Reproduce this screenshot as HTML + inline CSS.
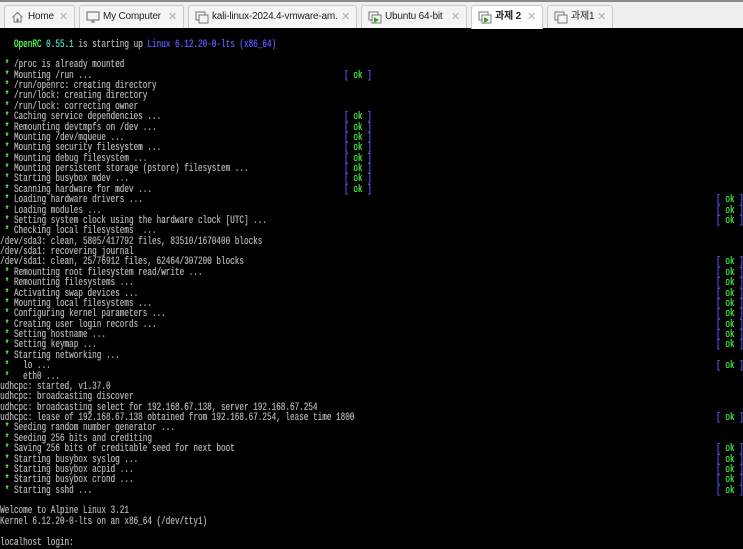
<!DOCTYPE html>
<html><head><meta charset="utf-8"><style>
*{margin:0;padding:0;box-sizing:border-box}
body{width:743px;height:545px;overflow:hidden;background:#000;position:relative;font-family:"Liberation Sans","Noto Sans CJK KR",sans-serif}
#bar{position:absolute;left:0;top:0;width:743px;height:28px;background:#efefef;border-top:2px solid #8a8a8a}
.tab{position:absolute;top:3px;height:23px;border:1px solid #c9c9c9;border-bottom:none;border-radius:3px 3px 0 0;background:#f4f4f4;font-size:10px;color:#222;line-height:22px;white-space:nowrap;overflow:hidden;letter-spacing:-0.2px}
.tab.act{background:#fff;height:24px}
.tab .x{position:absolute;right:6px;top:0;color:#b0b0b0;font-size:11px;background:inherit;padding-left:3px}
.tab svg{position:absolute;left:6px;top:5px}
.tab .lb{position:absolute;left:23px;top:0}
#term{position:absolute;left:0;top:39.5px;width:743px;font-family:"Liberation Mono",monospace;font-size:11px;color:#a8a8a8}
.l{height:10.375px;position:relative;white-space:pre;line-height:10.375px}
.t{display:inline-block;transform:scaleX(0.697);transform-origin:0 0;text-shadow:0.4px 0 0 currentColor}
.g{color:#54fc54}.b{color:#5858fc}.c{color:#54d8c8}
.ok{position:absolute;top:0;white-space:pre;transform:scaleX(0.697);transform-origin:0 0;color:#5858fc;text-shadow:0.4px 0 0 currentColor}
.ok i{font-style:normal;color:#3ee03e}
.o1{left:344px}.o2{left:716px}
</style></head><body>
<div id="bar">
<div class="tab" style="left:4px;width:71px"><svg width="13" height="12" viewBox="0 0 13 12"><path d="M1.5 6.5L6.5 1.5L11.5 6.5M3 5v6h3V8h1v3h3V5" fill="none" stroke="#777" stroke-width="1"/></svg><span class="lb">Home</span><span class="x">✕</span></div>
<div class="tab" style="left:79px;width:105px"><svg width="14" height="12" viewBox="0 0 14 12"><rect x="1" y="1" width="12" height="8" fill="none" stroke="#666"/><path d="M5 11h4M7 9v2" stroke="#666"/></svg><span class="lb">My Computer</span><span class="x">✕</span></div>
<div class="tab" style="left:188px;width:169px"><svg width="14" height="13" viewBox="0 0 14 13"><rect x="1" y="1" width="9" height="8" fill="none" stroke="#777"/><rect x="4" y="4" width="9" height="8" fill="#f4f4f4" stroke="#777"/></svg><span class="lb">kali-linux-2024.4-vmware-am...</span><span class="x">✕</span></div>
<div class="tab" style="left:361px;width:106px"><svg width="14" height="13" viewBox="0 0 14 13"><rect x="1" y="1" width="9" height="8" fill="none" stroke="#777"/><rect x="4" y="4" width="9" height="8" fill="#f4f4f4" stroke="#777"/><path d="M6 6l5 3-5 3z" fill="#3aa02a"/></svg><span class="lb">Ubuntu 64-bit</span><span class="x">✕</span></div>
<div class="tab act" style="left:471px;width:72px"><svg width="14" height="13" viewBox="0 0 14 13"><rect x="1" y="1" width="9" height="8" fill="none" stroke="#777"/><rect x="4" y="4" width="9" height="8" fill="#fff" stroke="#777"/><path d="M6 6l5 3-5 3z" fill="#3aa02a"/></svg><span class="lb" style="font-weight:bold">과제 2</span><span class="x">✕</span></div>
<div class="tab" style="left:547px;width:66px"><svg width="14" height="13" viewBox="0 0 14 13"><rect x="1" y="1" width="9" height="8" fill="none" stroke="#777"/><rect x="4" y="4" width="9" height="8" fill="#f4f4f4" stroke="#777"/></svg><span class="lb">과제1</span><span class="x">✕</span></div>
</div>
<div id="term">
<div class="l"><span class="t">   <span class="g">OpenRC</span> <span class="c">0.55.1</span> is starting up <span class="b">Linux 6.12.20-0-lts (x86_64)</span></span></div>
<div class="l"></div>
<div class="l"><span class="t"> <span class="g">*</span> /proc is already mounted</span></div>
<div class="l"><span class="t"> <span class="g">*</span> Mounting /run ...</span><span class="ok o1">[ <i>ok</i> ]</span></div>
<div class="l"><span class="t"> <span class="g">*</span> /run/openrc: creating directory</span></div>
<div class="l"><span class="t"> <span class="g">*</span> /run/lock: creating directory</span></div>
<div class="l"><span class="t"> <span class="g">*</span> /run/lock: correcting owner</span></div>
<div class="l"><span class="t"> <span class="g">*</span> Caching service dependencies ...</span><span class="ok o1">[ <i>ok</i> ]</span></div>
<div class="l"><span class="t"> <span class="g">*</span> Remounting devtmpfs on /dev ...</span><span class="ok o1">[ <i>ok</i> ]</span></div>
<div class="l"><span class="t"> <span class="g">*</span> Mounting /dev/mqueue ...</span><span class="ok o1">[ <i>ok</i> ]</span></div>
<div class="l"><span class="t"> <span class="g">*</span> Mounting security filesystem ...</span><span class="ok o1">[ <i>ok</i> ]</span></div>
<div class="l"><span class="t"> <span class="g">*</span> Mounting debug filesystem ...</span><span class="ok o1">[ <i>ok</i> ]</span></div>
<div class="l"><span class="t"> <span class="g">*</span> Mounting persistent storage (pstore) filesystem ...</span><span class="ok o1">[ <i>ok</i> ]</span></div>
<div class="l"><span class="t"> <span class="g">*</span> Starting busybox mdev ...</span><span class="ok o1">[ <i>ok</i> ]</span></div>
<div class="l"><span class="t"> <span class="g">*</span> Scanning hardware for mdev ...</span><span class="ok o1">[ <i>ok</i> ]</span></div>
<div class="l"><span class="t"> <span class="g">*</span> Loading hardware drivers ...</span><span class="ok o2">[ <i>ok</i> ]</span></div>
<div class="l"><span class="t"> <span class="g">*</span> Loading modules ...</span><span class="ok o2">[ <i>ok</i> ]</span></div>
<div class="l"><span class="t"> <span class="g">*</span> Setting system clock using the hardware clock [UTC] ...</span><span class="ok o2">[ <i>ok</i> ]</span></div>
<div class="l"><span class="t"> <span class="g">*</span> Checking local filesystems  ...</span></div>
<div class="l"><span class="t">/dev/sda3: clean, 5805/417792 files, 83510/1670400 blocks</span></div>
<div class="l"><span class="t">/dev/sda1: recovering journal</span></div>
<div class="l"><span class="t">/dev/sda1: clean, 25/76912 files, 62464/307200 blocks</span><span class="ok o2">[ <i>ok</i> ]</span></div>
<div class="l"><span class="t"> <span class="g">*</span> Remounting root filesystem read/write ...</span><span class="ok o2">[ <i>ok</i> ]</span></div>
<div class="l"><span class="t"> <span class="g">*</span> Remounting filesystems ...</span><span class="ok o2">[ <i>ok</i> ]</span></div>
<div class="l"><span class="t"> <span class="g">*</span> Activating swap devices ...</span><span class="ok o2">[ <i>ok</i> ]</span></div>
<div class="l"><span class="t"> <span class="g">*</span> Mounting local filesystems ...</span><span class="ok o2">[ <i>ok</i> ]</span></div>
<div class="l"><span class="t"> <span class="g">*</span> Configuring kernel parameters ...</span><span class="ok o2">[ <i>ok</i> ]</span></div>
<div class="l"><span class="t"> <span class="g">*</span> Creating user login records ...</span><span class="ok o2">[ <i>ok</i> ]</span></div>
<div class="l"><span class="t"> <span class="g">*</span> Setting hostname ...</span><span class="ok o2">[ <i>ok</i> ]</span></div>
<div class="l"><span class="t"> <span class="g">*</span> Setting keymap ...</span><span class="ok o2">[ <i>ok</i> ]</span></div>
<div class="l"><span class="t"> <span class="g">*</span> Starting networking ...</span></div>
<div class="l"><span class="t"> <span class="g">*</span>   lo ...</span><span class="ok o2">[ <i>ok</i> ]</span></div>
<div class="l"><span class="t"> <span class="g">*</span>   eth0 ...</span></div>
<div class="l"><span class="t">udhcpc: started, v1.37.0</span></div>
<div class="l"><span class="t">udhcpc: broadcasting discover</span></div>
<div class="l"><span class="t">udhcpc: broadcasting select for 192.168.67.138, server 192.168.67.254</span></div>
<div class="l"><span class="t">udhcpc: lease of 192.168.67.138 obtained from 192.168.67.254, lease time 1800</span><span class="ok o2">[ <i>ok</i> ]</span></div>
<div class="l"><span class="t"> <span class="g">*</span> Seeding random number generator ...</span></div>
<div class="l"><span class="t"> <span class="g">*</span> Seeding 256 bits and crediting</span></div>
<div class="l"><span class="t"> <span class="g">*</span> Saving 256 bits of creditable seed for next boot</span><span class="ok o2">[ <i>ok</i> ]</span></div>
<div class="l"><span class="t"> <span class="g">*</span> Starting busybox syslog ...</span><span class="ok o2">[ <i>ok</i> ]</span></div>
<div class="l"><span class="t"> <span class="g">*</span> Starting busybox acpid ...</span><span class="ok o2">[ <i>ok</i> ]</span></div>
<div class="l"><span class="t"> <span class="g">*</span> Starting busybox crond ...</span><span class="ok o2">[ <i>ok</i> ]</span></div>
<div class="l"><span class="t"> <span class="g">*</span> Starting sshd ...</span><span class="ok o2">[ <i>ok</i> ]</span></div>
<div class="l"></div>
<div class="l"><span class="t">Welcome to Alpine Linux 3.21</span></div>
<div class="l"><span class="t">Kernel 6.12.20-0-lts on an x86_64 (/dev/tty1)</span></div>
<div class="l"></div>
<div class="l"><span class="t">localhost login:</span></div>
</div>
</body></html>
